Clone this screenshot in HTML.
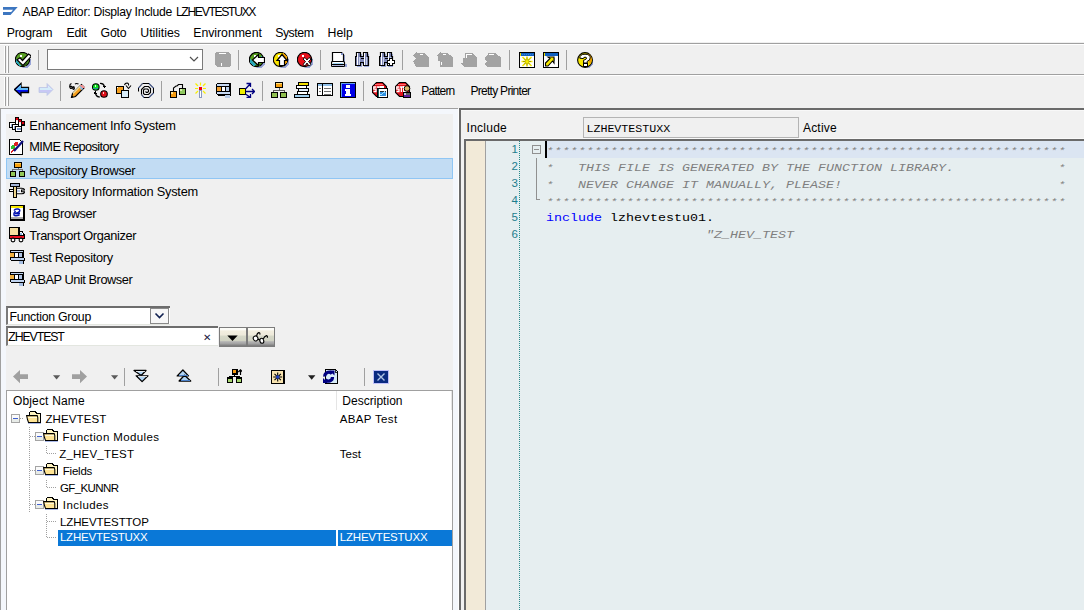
<!DOCTYPE html>
<html><head><meta charset="utf-8"><style>
html,body{margin:0;padding:0;width:1084px;height:610px;overflow:hidden;background:#fff;font-family:'Liberation Sans', sans-serif}
body>div{position:absolute}
.t{white-space:nowrap}
.c{color:#7f7f7f;font-style:italic}
.k{color:#0000ff}
.a{display:inline-block;transform:translateY(1px) scale(0.85)}
</style></head><body>
<div style="left:0px;top:0px;width:1084px;height:43px;background:#fff"></div>
<svg style="position:absolute;left:3px;top:6px" width="16" height="16" viewBox="0 0 16 16" shape-rendering="crispEdges"><path d="M0 1 H14.7 L7.5 9 H0 Z" fill="#3c76c0" shape-rendering="geometricPrecision"/><path d="M0 3.8 H10 L8.2 5.9 H0 Z" fill="#fff" shape-rendering="geometricPrecision"/></svg>
<div class="t" style="left:22.6px;top:4.66px;font-size:12.2px;line-height:normal;color:#000;letter-spacing:-0.267px;font-family:'Liberation Sans', sans-serif;">ABAP Editor: Display Include</div>
<div class="t" style="left:175.9px;top:4.66px;font-size:12.2px;line-height:normal;color:#000;letter-spacing:-1.353px;font-family:'Liberation Sans', sans-serif;">LZHEVTESTUXX</div>
<div class="t" style="left:6.7px;top:25.77px;font-size:12.3px;line-height:normal;color:#000;letter-spacing:-0.227px;font-family:'Liberation Sans', sans-serif;">Program</div>
<div class="t" style="left:66.5px;top:25.77px;font-size:12.3px;line-height:normal;color:#000;letter-spacing:-0.265px;font-family:'Liberation Sans', sans-serif;">Edit</div>
<div class="t" style="left:100.5px;top:25.77px;font-size:12.3px;line-height:normal;color:#000;letter-spacing:-0.155px;font-family:'Liberation Sans', sans-serif;">Goto</div>
<div class="t" style="left:140.29999999999998px;top:25.77px;font-size:12.3px;line-height:normal;color:#000;letter-spacing:-0.005px;font-family:'Liberation Sans', sans-serif;">Utilities</div>
<div class="t" style="left:193.29999999999998px;top:25.77px;font-size:12.3px;line-height:normal;color:#000;letter-spacing:-0.045px;font-family:'Liberation Sans', sans-serif;">Environment</div>
<div class="t" style="left:275.2px;top:25.77px;font-size:12.3px;line-height:normal;color:#000;letter-spacing:-0.462px;font-family:'Liberation Sans', sans-serif;">System</div>
<div class="t" style="left:327.5px;top:25.77px;font-size:12.3px;line-height:normal;color:#000;letter-spacing:0.034px;font-family:'Liberation Sans', sans-serif;">Help</div>
<div style="left:0px;top:42px;width:1084px;height:1px;background:#f0f0f0"></div>
<div style="left:0px;top:43px;width:1084px;height:1px;background:#a0a0a0"></div>
<div style="left:0px;top:44px;width:1084px;height:1px;background:#fff"></div>
<div style="left:0px;top:45px;width:1084px;height:29px;background:#f0f0f0"></div>
<div style="left:0px;top:74px;width:1084px;height:1px;background:#a0a0a0"></div>
<div style="left:0px;top:75px;width:1084px;height:1px;background:#fff"></div>
<div style="left:0px;top:76px;width:1084px;height:32px;background:#f0f0f0"></div>
<div style="left:0px;top:108px;width:1084px;height:1px;background:#a0a0a0"></div>
<div style="left:4px;top:46px;width:1px;height:27px;background:#fff"></div>
<div style="left:5px;top:46px;width:1px;height:27px;background:#a0a0a0"></div>
<div style="left:7px;top:46px;width:1px;height:27px;background:#fff"></div>
<div style="left:8px;top:46px;width:1px;height:27px;background:#a0a0a0"></div>
<div style="left:4px;top:77px;width:1px;height:29px;background:#fff"></div>
<div style="left:5px;top:77px;width:1px;height:29px;background:#a0a0a0"></div>
<div style="left:7px;top:77px;width:1px;height:29px;background:#fff"></div>
<div style="left:8px;top:77px;width:1px;height:29px;background:#a0a0a0"></div>
<svg style="position:absolute;left:15px;top:52px" width="16" height="16" viewBox="0 0 16 16" shape-rendering="crispEdges"><path d="M6 16 H12 L16 12 V6 L12 14 Z" fill="#9aa6d8"/><path d="M7.5 0.4 A7.1 7.1 0 1 1 7.49 0.4 Z" fill="#5aa024" stroke="#000" stroke-width="1.1" shape-rendering="geometricPrecision"/><path d="M1 6 L4 11 L6 13.5 L4.5 14 L1 10.5 Z" fill="#2aa8b8"/><path d="M5 14 H10 L13 11 L9 12 Z" fill="#2e6412"/><rect x="5" y="3" width="2" height="2" fill="#fff"/><path d="M2 7.8 L5 5.8 L7.5 8.5 L13.5 2 L16.5 4 L8 13.5 Z" fill="#fff" stroke="#000" stroke-width="1.2" shape-rendering="geometricPrecision"/></svg>
<div style="left:38px;top:50px;width:1px;height:20px;background:#a0a0a0"></div>
<div style="left:47px;top:49px;width:156px;height:21px;background:#fff;border:1px solid #7a7a7a;box-sizing:border-box"></div>
<svg style="position:absolute;left:189px;top:55px" width="10" height="8" viewBox="0 0 10 8"><path d="M1 2 L5 6 L9 2" fill="none" stroke="#505050" stroke-width="1.2"/></svg>
<svg style="position:absolute;left:215px;top:52px" width="16" height="16" viewBox="0 0 16 16" shape-rendering="crispEdges"><path d="M1 0.3 H14 L16 2.3 V14 L15 14.7 H2.5 L0 12.3 V1.3 Z" fill="#a3a3a3"/><rect x="4" y="1" width="7" height="1" fill="#fff"/><rect x="6" y="11" width="1" height="3" fill="#fff"/></svg>
<div style="left:238px;top:50px;width:1px;height:20px;background:#a0a0a0"></div>
<svg style="position:absolute;left:249px;top:52px" width="16" height="16" viewBox="0 0 16 16" shape-rendering="crispEdges"><path d="M6 16 H12 L16 12 V6 L12 14 Z" fill="#9aa6d8"/><path d="M7.5 0.4 A7.1 7.1 0 1 1 7.49 0.4 Z" fill="#58a020" stroke="#000" stroke-width="1.2" shape-rendering="geometricPrecision"/><path d="M1 6 L6 12 L8 14 L4.5 14 L1 10.5 Z" fill="#2aa8b8"/><path d="M11 4 L14 6 L12 3 Z" fill="#2aa8b8"/><path d="M5 14 H10 L12 12 L8 12 Z" fill="#2e6412"/><rect x="5" y="3" width="2" height="2" fill="#fff"/><path d="M3.5 8 L9.5 2.5 V5.5 H15.5 V10.5 H9.5 V13.5 Z" fill="#fff" stroke="#000" stroke-width="1.2" shape-rendering="geometricPrecision"/></svg>
<svg style="position:absolute;left:273px;top:52px" width="16" height="16" viewBox="0 0 16 16" shape-rendering="crispEdges"><path d="M6 16 H12 L16 12 V6 L12 14 Z" fill="#9aa6d8"/><path d="M7.5 0.4 A7.1 7.1 0 1 1 7.49 0.4 Z" fill="#f8e400" stroke="#000" stroke-width="1.2" shape-rendering="geometricPrecision"/><path d="M10 1 L14 5 V10 L12 12 L11 6 Z" fill="#f0a000"/><path d="M1 8 L3 12 L5 14 L2 11 Z" fill="#f09000"/><rect x="5" y="3" width="2" height="2" fill="#fff"/><path d="M9 2.5 L14 8.5 H11.5 V13.5 H6.5 V8.5 H4 Z" fill="#fff" stroke="#000" stroke-width="1.2" shape-rendering="geometricPrecision"/></svg>
<svg style="position:absolute;left:297px;top:52px" width="16" height="16" viewBox="0 0 16 16" shape-rendering="crispEdges"><path d="M6 16 H12 L16 12 V6 L12 14 Z" fill="#9aa6d8"/><path d="M7.5 0.4 A7.1 7.1 0 1 1 7.49 0.4 Z" fill="#e8101a" stroke="#000" stroke-width="1.2" shape-rendering="geometricPrecision"/><rect x="5" y="3" width="2" height="2" fill="#fff"/><path d="M6 7 L8 5.5 L10 8 L12 5.5 L14 7 L11.5 9.5 L14 12.5 L12 14 L10 11 L8 14 L6 12.5 L8.5 9.5 Z" fill="#fff" stroke="#000" stroke-width="0.9" shape-rendering="geometricPrecision"/></svg>
<div style="left:320px;top:50px;width:1px;height:20px;background:#a0a0a0"></div>
<svg style="position:absolute;left:331px;top:52px" width="16" height="16" viewBox="0 0 16 16" shape-rendering="crispEdges"><path d="M3 12 H16 V15 H3 Z M13 3 H14 V11 H13 Z" fill="#9aa6d8"/><path d="M1.5 0.5 H10.5 L12.5 2.5 V10.5 H1.5 Z" fill="#fff" stroke="#000" stroke-width="1.2" shape-rendering="geometricPrecision"/><rect x="10" y="1" width="2" height="2" fill="#8090c8"/><rect x="0.5" y="9.5" width="13" height="5" rx="1" fill="#fff" stroke="#000" stroke-width="1.2" shape-rendering="geometricPrecision"/><rect x="1" y="11.5" width="12" height="1" fill="#000"/><rect x="2" y="10.5" width="10" height="1" fill="#a0d8f8"/><rect x="2" y="13" width="10" height="1" fill="#a8b0d8"/></svg>
<svg style="position:absolute;left:355px;top:52px" width="16" height="16" viewBox="0 0 16 16" shape-rendering="crispEdges"><path d="M2 2 H7 V6 H9 V2 H14 V15 H9 V12 H7 V15 H2 Z" fill="#9aa6d8"/><path d="M1.5 0.5 H5.5 V4.5 H8.5 V0.5 H12.5 V4.5 H13.5 V13.5 H8.5 V10.5 H5.5 V13.5 H0.5 V4.5 H1.5 Z" fill="#8088b8" stroke="#000" stroke-width="1.2" shape-rendering="geometricPrecision"/><rect x="2" y="1" width="1.2" height="12" fill="#fff"/><rect x="9" y="1" width="1.2" height="12" fill="#fff"/><rect x="4" y="5" width="1" height="8" fill="#c8d0e8"/><rect x="11" y="5" width="1" height="8" fill="#c8d0e8"/><rect x="5.5" y="5.5" width="3" height="1" fill="#000"/></svg>
<svg style="position:absolute;left:379px;top:52px" width="16" height="16" viewBox="0 0 16 16" shape-rendering="crispEdges"><path d="M2 2 H7 V6 H9 V2 H14 V15 H9 V12 H7 V15 H2 Z" fill="#9aa6d8"/><path d="M1.5 0.5 H5.5 V4.5 H8.5 V0.5 H12.5 V4.5 H13.5 V13.5 H8.5 V10.5 H5.5 V13.5 H0.5 V4.5 H1.5 Z" fill="#8088b8" stroke="#000" stroke-width="1.2" shape-rendering="geometricPrecision"/><rect x="2" y="1" width="1.2" height="12" fill="#fff"/><rect x="9" y="1" width="1.2" height="12" fill="#fff"/><rect x="4" y="5" width="1" height="8" fill="#c8d0e8"/><rect x="11" y="5" width="1" height="8" fill="#c8d0e8"/><rect x="5.5" y="5.5" width="3" height="1" fill="#000"/><path d="M10.5 6.5 H13.5 V8.5 H15.5 V11.5 H13.5 V13.5 H10.5 V11.5 H8.5 V8.5 H10.5 Z" fill="#fff" stroke="#000" stroke-width="1"/></svg>
<div style="left:402px;top:50px;width:1px;height:20px;background:#a0a0a0"></div>
<svg style="position:absolute;left:413px;top:52px" width="16" height="16" viewBox="0 0 16 16" shape-rendering="crispEdges"><path d="M0 3.5 L3.5 0 L4.5 1 H11.5 L16 5.5 V15 H3.5 L1.8 13 L0 9.5 L3 7 Z" fill="#a3a3a3"/><rect x="7" y="2" width="3" height="1" fill="#fff"/></svg>
<svg style="position:absolute;left:437px;top:52px" width="16" height="16" viewBox="0 0 16 16" shape-rendering="crispEdges"><path d="M0 3.3 L3.6 0 L5 1 H10.6 L16 5.3 V14.6 H3 V9.3 H1 V4.3 Z" fill="#a3a3a3"/><rect x="5.5" y="2" width="3" height="1" fill="#fff"/><rect x="4" y="10" width="1" height="3" fill="#fff"/></svg>
<svg style="position:absolute;left:461px;top:52px" width="16" height="16" viewBox="0 0 16 16" shape-rendering="crispEdges"><path d="M4 1 H11.5 L16 5.3 V14.6 H3.2 L0 11.6 L2.2 10 V6 H4 Z" fill="#a3a3a3"/><path d="M5.5 6 V2.5 H10.5" fill="none" stroke="#fff"/></svg>
<svg style="position:absolute;left:485px;top:52px" width="16" height="16" viewBox="0 0 16 16" shape-rendering="crispEdges"><path d="M3 1 H10.4 L15.7 5.3 V14.6 H2.3 L0 12 L2.3 9.5 L0 7 L0 5.3 L3 3 Z" fill="#a3a3a3"/><rect x="4" y="2" width="5" height="1" fill="#fff"/></svg>
<div style="left:509px;top:50px;width:1px;height:20px;background:#a0a0a0"></div>
<svg style="position:absolute;left:519px;top:52px" width="16" height="16" viewBox="0 0 16 16" shape-rendering="crispEdges"><rect x="0.5" y="0.5" width="15" height="15" fill="#fff" stroke="#000" stroke-width="1.2"/><rect x="1" y="1" width="14" height="3" fill="#1060c0"/><rect x="1" y="1" width="1" height="3" fill="#f0e000"/><path d="M3 2.5 H14" stroke="#5090e0" stroke-width="0.7" stroke-dasharray="1 1"/><path d="M8 4.5 V14.5 M2.5 9.5 H13.5 M3.5 5 L12.5 14 M12.5 5 L3.5 14" stroke="#f2e600" stroke-width="1.6" shape-rendering="geometricPrecision"/><path d="M8 5.5 V13.5 M4 9.5 H12 M5.2 6.7 L10.8 12.3 M10.8 6.7 L5.2 12.3" stroke="#202000" stroke-width="0.7" opacity="0.55" shape-rendering="geometricPrecision"/><circle cx="8" cy="9.5" r="1.6" fill="#f8f000" shape-rendering="geometricPrecision"/></svg>
<svg style="position:absolute;left:543px;top:52px" width="16" height="16" viewBox="0 0 16 16" shape-rendering="crispEdges"><rect x="0.5" y="0.5" width="15" height="15" fill="#fff" stroke="#000" stroke-width="1.2"/><rect x="1" y="1" width="14" height="3" fill="#1060c0"/><rect x="1" y="1" width="1" height="3" fill="#f0e000"/><path d="M11 12 L12 6 L6 6" fill="#9aa6d8"/><path d="M2.5 14 L2.5 11 L7 6.5 L5 5 H11 V11 L9.5 9 L5 14 Z" fill="#f2e600" stroke="#000" stroke-width="1.1" shape-rendering="geometricPrecision"/></svg>
<div style="left:566px;top:50px;width:1px;height:20px;background:#a0a0a0"></div>
<svg style="position:absolute;left:577px;top:52px" width="16" height="16" viewBox="0 0 16 16" shape-rendering="crispEdges"><path d="M8 16 H13 L16 12 V7 Z" fill="#9aa6d8"/><circle cx="8" cy="8" r="7.4" fill="#f8e800" stroke="#000" stroke-width="1.1" shape-rendering="geometricPrecision"/><path d="M11 1.8 A6.6 6.6 0 0 1 14.6 9 L13 12.5 L11.5 9 Z" fill="#f0a000" shape-rendering="geometricPrecision"/><path d="M2.8 6.2 Q2.8 2.2 8 2.2 Q13.2 2.2 13.2 5.8 Q13.2 8.6 10.2 9.3 V11 H6.6 V8.2 Q9.6 7.6 9.6 6 Q9.6 5.2 8 5.2 Q6.4 5.2 6.4 6.6 Z" fill="#fff" stroke="#000" stroke-width="1" shape-rendering="geometricPrecision"/><rect x="6.5" y="11.5" width="4" height="3" fill="#fff" stroke="#000" stroke-width="1"/></svg>
<svg style="position:absolute;left:14px;top:82px" width="16" height="16" viewBox="0 0 16 16" shape-rendering="crispEdges"><path d="M0.5 7.5 L7 1.5 V5.5 H14.5 V10.5 H7 V13.5 Z" fill="#0010f0" stroke="#000" stroke-width="1.3" shape-rendering="geometricPrecision"/><path d="M2 7 L6.5 3 V6.3 H14 V7.8 H2 Z" fill="#60b8f8"/></svg>
<svg style="position:absolute;left:38px;top:82px" width="16" height="16" viewBox="0 0 16 16" shape-rendering="crispEdges"><path d="M15 7.5 L9 1.5 V5.5 H1 V10.5 H9 V13.5 Z" fill="#c8c8f4" stroke="#bcc8e4" stroke-width="0.8" shape-rendering="geometricPrecision"/><path d="M1.5 6 H9.5 V3 L14 7.5 H1.5 Z" fill="#d4ecfa"/></svg>
<div style="left:60px;top:81px;width:1px;height:20px;background:#a0a0a0"></div>
<svg style="position:absolute;left:69px;top:82px" width="16" height="16" viewBox="0 0 16 16" shape-rendering="crispEdges"><path d="M2.5 15.5 L3.5 11.5 L12.5 2.5 L15.5 5.5 L6.5 14.5 Z" fill="#f5a020" stroke="#000" stroke-width="1.2" shape-rendering="geometricPrecision"/><path d="M12.5 2.5 L15.5 5.5 L14.2 6.8 L11.2 3.8 Z" fill="#f09090"/><path d="M10.5 4.5 L13.5 7.5" stroke="#90b8e8" stroke-width="1.8" shape-rendering="geometricPrecision"/><path d="M2.5 15.5 L3 13.5 L4.5 15 Z" fill="#000"/><path d="M4 11.5 L11 4.5" stroke="#ffe8a0" stroke-width="1.2" shape-rendering="geometricPrecision"/><path d="M2.5 1.5 Q0.5 2 0.8 5 Q1.2 7 2.6 6.2 Q3.5 5.5 2.8 4.5 Q2 4 1 4.8 M4.6 4.5 Q3.6 5 4 7 Q4.5 8 5.2 7 Q5.6 5.5 4.6 4.5 M6 2 Q7.5 1 9.5 2" fill="none" stroke="#000" stroke-width="1.2" shape-rendering="geometricPrecision"/></svg>
<svg style="position:absolute;left:92px;top:82px" width="16" height="16" viewBox="0 0 16 16" shape-rendering="crispEdges"><circle cx="3.8" cy="5" r="3.3" fill="#10e020" stroke="#000" stroke-width="1.1" shape-rendering="geometricPrecision"/><path d="M1 6 Q3 9 6.8 6" fill="#2890a0"/><circle cx="3.3" cy="4" r="0.9" fill="#d0ffd0"/><circle cx="12" cy="12" r="3.3" fill="#e0101a" stroke="#000" stroke-width="1.1" shape-rendering="geometricPrecision"/><circle cx="11.3" cy="11" r="0.9" fill="#ffd0d0"/><path d="M8 1.5 Q11.5 1.2 12.5 4.5" fill="none" stroke="#000" stroke-width="1.2" shape-rendering="geometricPrecision"/><path d="M10.5 3.5 H14.5 L12.5 6.5 Z" fill="#000"/><path d="M8 15 Q4.5 15.2 3.5 11.5" fill="none" stroke="#000" stroke-width="1.2" shape-rendering="geometricPrecision"/><path d="M1.5 12 L3.5 9 L5.5 12 Z" fill="#000"/></svg>
<svg style="position:absolute;left:116px;top:82px" width="16" height="16" viewBox="0 0 16 16" shape-rendering="crispEdges"><rect x="0.5" y="4.5" width="7" height="7" fill="#f5a020" stroke="#000" stroke-width="1.2"/><rect x="1" y="5" width="1" height="1" fill="#fff"/><rect x="5.5" y="8.5" width="7" height="7" fill="#c8e0f0" stroke="#000" stroke-width="1.2"/><rect x="6.2" y="9.2" width="5.6" height="5.6" fill="#d8ecf8"/><path d="M8.5 3 Q9 1 11 1 Q13 1.2 12.5 3.5" fill="none" stroke="#000" stroke-width="1.1" shape-rendering="geometricPrecision"/><path d="M10 3.5 L12.5 6.5 L15 3.5" fill="none" stroke="#000" stroke-width="1.1" shape-rendering="geometricPrecision"/></svg>
<svg style="position:absolute;left:138px;top:82px" width="16" height="16" viewBox="0 0 16 16" shape-rendering="crispEdges"><g fill="none" stroke="#000" stroke-width="1.1" shape-rendering="geometricPrecision"><path d="M0.5 9.5 V6 L4.5 1.5 H11 L15.5 6 V11 L11 15.5 H6 L3.5 12.5 V7.5 L6.5 4.5 H10.5 L12.5 6.5 V10.5 L10.5 12.5 H6.5 L5.5 11.5 V8 L6.5 7 H9.5 L10.5 8 V9.5 L9.5 10.5 H8.5 L7.5 9.5"/></g><path d="M0.5 6 L4.5 1.5 M11 1.5 L15.5 6 M15.5 11 L11 15.5 M6 15.5 L3.5 12.5" stroke="#7890d0" stroke-width="1.1" opacity="0.6" fill="none"/></svg>
<div style="left:161px;top:81px;width:1px;height:20px;background:#a0a0a0"></div>
<svg style="position:absolute;left:170px;top:82px" width="16" height="16" viewBox="0 0 16 16" shape-rendering="crispEdges"><rect x="0.5" y="9.5" width="6" height="6" fill="#f59a10" stroke="#000" stroke-width="1.2"/><rect x="1.2" y="10.2" width="2" height="2" fill="#ffe090"/><rect x="9.5" y="6.5" width="6" height="6" fill="#90c860" stroke="#000" stroke-width="1.2"/><rect x="10.2" y="7.2" width="2" height="2" fill="#d8f0b0"/><path d="M3.5 9 V6 L6 4 H7 L8.5 2.5 H12.5 V6" fill="none" stroke="#000" stroke-width="1.1" shape-rendering="geometricPrecision"/></svg>
<svg style="position:absolute;left:195px;top:82px" width="16" height="16" viewBox="0 0 16 16" shape-rendering="crispEdges"><rect x="4.5" y="8.5" width="2" height="7" fill="#fff" stroke="#8898c0"/><rect x="4" y="5" width="3" height="3" fill="#f00010"/><path d="M5.5 0.5 V3.5 M0 6.5 H3 M8 6.5 H11 M0.5 1.5 L3 4 M10.5 1.5 L8 4 M0.5 11.5 L3 9 M10.5 11.5 L8 9" stroke="#f8f000" stroke-width="1.2" shape-rendering="geometricPrecision"/></svg>
<svg style="position:absolute;left:215px;top:82px" width="16" height="16" viewBox="0 0 16 16" shape-rendering="crispEdges"><path d="M2.5 0.5 H15.5 V11.5 H16.5 V13.5 H2.5 L0.5 11.5 V2.5 Z" fill="#000"/><rect x="2" y="2" width="12" height="2" fill="#c8daf4"/><rect x="2" y="5" width="4" height="4" fill="#f0a030"/><rect x="7" y="5" width="3" height="4" fill="#fff"/><rect x="11" y="5" width="3" height="4" fill="#b8cce8"/><rect x="2" y="10" width="13" height="2" fill="#c8daf4"/><rect x="10" y="13" width="5" height="3" fill="#b8cce8"/></svg>
<svg style="position:absolute;left:239px;top:82px" width="16" height="16" viewBox="0 0 16 16" shape-rendering="crispEdges"><rect x="0.5" y="6.5" width="6" height="6" fill="#f0f000" stroke="#000" stroke-width="1.3"/><path d="M6.5 9.5 H15.5 M13 7 L15.5 9.5 L13 12 M6.5 7 L11.5 1.5 M7.5 1.5 H11.5 V5 M6.5 12 L11.5 15.5 M7.5 15.5 H11.5 V12" fill="none" stroke="#000080" stroke-width="1.3" shape-rendering="geometricPrecision"/></svg>
<div style="left:262px;top:81px;width:1px;height:20px;background:#a0a0a0"></div>
<svg style="position:absolute;left:271px;top:82px" width="16" height="16" viewBox="0 0 16 16" shape-rendering="crispEdges"><rect x="4.5" y="0.5" width="7" height="5" fill="#f5a010" stroke="#000"/><rect x="5" y="1" width="6" height="1" fill="#ffe080"/><path d="M8 6 V8 M2.5 11 V8.5 H13.5 V11" fill="none" stroke="#606060" stroke-width="1"/><rect x="0.5" y="10.5" width="6" height="5" fill="#90c050" stroke="#000"/><rect x="9.5" y="10.5" width="6" height="5" fill="#90c050" stroke="#000"/></svg>
<svg style="position:absolute;left:294px;top:82px" width="16" height="16" viewBox="0 0 16 16" shape-rendering="crispEdges"><rect x="4.5" y="0.5" width="10" height="3" fill="#f5e000" stroke="#000"/><rect x="2.5" y="3.5" width="10" height="3" fill="#fff" stroke="#000"/><rect x="4.5" y="6.5" width="10" height="3" fill="#e0f0ff" stroke="#000"/><rect x="3.5" y="9.5" width="10" height="3" fill="#fff" stroke="#000"/><rect x="0.5" y="12.5" width="15" height="3" fill="#a0d0f0" stroke="#000"/></svg>
<svg style="position:absolute;left:317px;top:82px" width="16" height="16" viewBox="0 0 16 16" shape-rendering="crispEdges"><rect x="0.5" y="1.5" width="15" height="12" fill="#fff" stroke="#000" stroke-width="1.2"/><rect x="1" y="2" width="14" height="2" fill="#90c0e8"/><rect x="5" y="2" width="1" height="11" fill="#000"/><path d="M2 6.5 H4 M2 9.5 H4 M7 6.5 H14 M7 9.5 H14 M7 12 H14" stroke="#707070"/></svg>
<svg style="position:absolute;left:340px;top:82px" width="16" height="16" viewBox="0 0 16 16" shape-rendering="crispEdges"><rect x="0.5" y="0.5" width="15" height="15" fill="#0000e8" stroke="#000" stroke-width="1.2"/><rect x="1" y="1" width="14" height="1" fill="#60a0f0"/><rect x="1" y="1" width="1" height="14" fill="#60a0f0"/><rect x="6" y="3" width="4" height="3" fill="#fff"/><path d="M5 7 H10 V12 H11 V14 H5 V12 H6 V9 H5 Z" fill="#fff"/></svg>
<div style="left:363px;top:81px;width:1px;height:20px;background:#a0a0a0"></div>
<svg style="position:absolute;left:372px;top:82px" width="16" height="16" viewBox="0 0 16 16" shape-rendering="crispEdges"><path d="M4.5 0.5 H10.5 L14.5 4.5 V10.5 L10.5 14.5 H4.5 L0.5 10.5 V4.5 Z" fill="#e0101a" stroke="#000" stroke-width="1.1" shape-rendering="geometricPrecision"/><rect x="3" y="2" width="8" height="1.2" fill="#ff7070"/><path d="M4.2 5 H1.8 V7.2 H4 V9.5 H1.5 M4.8 5 H8 M6.4 5 V10" fill="none" stroke="#fff" stroke-width="1.3" shape-rendering="geometricPrecision"/><rect x="8.6" y="5" width="3" height="4.5" fill="none" stroke="#fff" stroke-width="1.3"/><rect x="5.5" y="6.5" width="10" height="9" fill="#fff" stroke="#000" stroke-width="1.1"/><rect x="6" y="7" width="1" height="8" fill="#206060"/><rect x="7.5" y="8.5" width="6.5" height="5.5" fill="#3090e0"/><rect x="7.5" y="8.5" width="6.5" height="1" fill="#303030"/><path d="M8.5 13 L13 9.5" stroke="#a0e0ff"/></svg>
<svg style="position:absolute;left:395px;top:82px" width="16" height="16" viewBox="0 0 16 16" shape-rendering="crispEdges"><path d="M4.5 0.5 H10.5 L14.5 4.5 V10.5 L10.5 14.5 H4.5 L0.5 10.5 V4.5 Z" fill="#e0101a" stroke="#000" stroke-width="1.1" shape-rendering="geometricPrecision"/><rect x="3" y="2" width="8" height="1.2" fill="#ff7070"/><path d="M4.2 5 H1.8 V7.2 H4 V9.5 H1.5 M4.8 5 H8 M6.4 5 V10" fill="none" stroke="#fff" stroke-width="1.3" shape-rendering="geometricPrecision"/><rect x="8.6" y="5" width="3" height="4.5" fill="none" stroke="#fff" stroke-width="1.3"/><circle cx="12" cy="6.5" r="2.8" fill="#d8b868" stroke="#000" shape-rendering="geometricPrecision"/><rect x="8.5" y="10.5" width="7" height="5" fill="#606060" stroke="#000"/><rect x="9" y="13" width="6" height="2" fill="#6020a0"/><rect x="9" y="11" width="2" height="2" fill="#d0c0f0"/></svg>
<div class="t" style="left:421.3px;top:84.34px;font-size:12px;line-height:normal;color:#000;letter-spacing:-0.782px;font-family:'Liberation Sans', sans-serif;">Pattern</div>
<div class="t" style="left:470.5px;top:84.34px;font-size:12px;line-height:normal;color:#000;letter-spacing:-0.725px;font-family:'Liberation Sans', sans-serif;">Pretty Printer</div>
<div style="left:0px;top:109px;width:1px;height:501px;background:#a0a0a0"></div>
<div style="left:1px;top:109px;width:457px;height:501px;background:#f4f7fc"></div>
<div style="left:6px;top:114px;width:447px;height:496px;background:#f0f0f0"></div>
<div style="left:6px;top:158px;width:447px;height:21px;background:#c2dcf3;border:1px solid #90c6f4;box-sizing:border-box"></div>
<svg style="position:absolute;left:9px;top:117px" width="16" height="16" viewBox="0 0 16 16" shape-rendering="crispEdges"><rect x="6.5" y="0.6" width="3" height="7" fill="#fff" stroke="#000" stroke-width="1.2"/><rect x="9.5" y="2.6" width="3" height="7" fill="#fff" stroke="#000" stroke-width="1.2"/><rect x="12.5" y="4.6" width="3" height="3.4" fill="#fff" stroke="#000" stroke-width="1.2"/><circle cx="8" cy="2.1" r="1.25" fill="#e00010" shape-rendering="geometricPrecision"/><circle cx="11" cy="4.1" r="1.25" fill="#e00010" shape-rendering="geometricPrecision"/><circle cx="14" cy="6.1" r="1.25" fill="#e00010" shape-rendering="geometricPrecision"/><rect x="0.6" y="5.6" width="6" height="5" fill="#fff" stroke="#000" stroke-width="1.2"/><rect x="3.6" y="7.6" width="6" height="5" fill="#fff" stroke="#000" stroke-width="1.2"/><rect x="6.6" y="9.8" width="6" height="5" fill="#fff" stroke="#000" stroke-width="1.2"/><rect x="8" y="11.3" width="4" height="2" fill="#8098c8"/><rect x="1.5" y="7" width="1" height="3" fill="#90a8d8"/><rect x="4.5" y="9" width="1" height="3" fill="#90a8d8"/></svg>
<div class="t" style="left:29.3px;top:117.82px;font-size:12.8px;line-height:normal;color:#000;letter-spacing:-0.156px;font-family:'Liberation Sans', sans-serif;">Enhancement Info System</div>
<svg style="position:absolute;left:9px;top:139px" width="16" height="16" viewBox="0 0 16 16" shape-rendering="crispEdges"><path d="M0.5 0.5 H10.5 L13.5 3.5 V15.5 H0.5 Z" fill="#fff" stroke="#000" stroke-width="1.2"/><circle cx="4" cy="8" r="2" fill="#30c030"/><circle cx="7" cy="5" r="2" fill="#e02020"/><path d="M2 13 L6 10" stroke="#e02020" stroke-width="1.5"/><path d="M5 12 L14 2" stroke="#101080" stroke-width="2.2" shape-rendering="geometricPrecision"/></svg>
<div class="t" style="left:29.3px;top:139.42px;font-size:12.8px;line-height:normal;color:#000;letter-spacing:-0.597px;font-family:'Liberation Sans', sans-serif;">MIME Repository</div>
<svg style="position:absolute;left:9px;top:162px" width="16" height="16" viewBox="0 0 16 16" shape-rendering="crispEdges"><rect x="5.6" y="0.6" width="6.8" height="4.6" fill="#f5a010" stroke="#000" stroke-width="1.2"/><rect x="6.2" y="1.2" width="5.6" height="1.2" fill="#ffd060"/><path d="M9 5.5 V7.5 M3.8 9.5 V7.5 H13.2 V9.5" fill="none" stroke="#707070" stroke-width="1"/><rect x="1.1" y="9.6" width="5.4" height="4.6" fill="#90c858" stroke="#000" stroke-width="1.2"/><rect x="10.4" y="9.6" width="5.4" height="4.6" fill="#90c858" stroke="#000" stroke-width="1.2"/></svg>
<div class="t" style="left:29.3px;top:162.82px;font-size:12.8px;line-height:normal;color:#000;letter-spacing:-0.317px;font-family:'Liberation Sans', sans-serif;">Repository Browser</div>
<svg style="position:absolute;left:9px;top:183px" width="16" height="16" viewBox="0 0 16 16" shape-rendering="crispEdges"><rect x="1.6" y="0.6" width="9" height="2.8" fill="#a8b8d8" stroke="#000" stroke-width="1.2"/><rect x="4.6" y="3.4" width="2.8" height="11" fill="#f0d890" stroke="#000" stroke-width="1.2"/><rect x="0.6" y="6.6" width="4" height="2.2" fill="#fff" stroke="#000" stroke-width="1.1"/><path d="M7.5 5.2 H12.8 Q15.5 5.2 15.5 7 H12.5 V8.8 H15.5 Q15.5 10.8 12.8 10.8 H7.5 Z" fill="#fff" stroke="#000" stroke-width="1.1" shape-rendering="geometricPrecision"/><rect x="8" y="7" width="3" height="2" fill="#b8c8e8"/></svg>
<div class="t" style="left:29.3px;top:184.12px;font-size:12.8px;line-height:normal;color:#000;letter-spacing:-0.214px;font-family:'Liberation Sans', sans-serif;">Repository Information System</div>
<svg style="position:absolute;left:9px;top:205px" width="16" height="16" viewBox="0 0 16 16" shape-rendering="crispEdges"><rect x="1.2" y="0.2" width="13.6" height="14.6" fill="#fff" stroke="#000" stroke-width="1.4"/><rect x="2" y="1" width="12" height="2" fill="#f8e800"/><rect x="2" y="11.5" width="12" height="2.6" fill="#a8a8a8"/><path d="M0.5 13.5 L2 11.5" stroke="#000" stroke-width="1"/><path d="M5 5.5 Q6 3.5 9 4 Q11.5 4.5 10.5 6.5 Q9.5 8 6 8.5 H11 M6.5 6 Q4.5 8 5 10 Q6 11.5 10.5 10" fill="none" stroke="#0010b0" stroke-width="1.5" shape-rendering="geometricPrecision"/></svg>
<div class="t" style="left:29.3px;top:205.82px;font-size:12.8px;line-height:normal;color:#000;letter-spacing:-0.386px;font-family:'Liberation Sans', sans-serif;">Tag Browser</div>
<svg style="position:absolute;left:9px;top:227px" width="16" height="16" viewBox="0 0 16 16" shape-rendering="crispEdges"><rect x="0.6" y="0.6" width="9.4" height="8" fill="#f8e0a0" stroke="#000" stroke-width="1.2"/><path d="M10 4.6 H13 L15.4 8 V11 H10 Z" fill="#fff" stroke="#000" stroke-width="1.2"/><rect x="11" y="5.5" width="2" height="2" fill="#90b8e0"/><rect x="0.6" y="8.6" width="14.8" height="3" fill="#f01020" stroke="#000" stroke-width="1.1"/><circle cx="4" cy="13" r="1.9" fill="#fff" stroke="#000" stroke-width="1.1" shape-rendering="geometricPrecision"/><circle cx="12" cy="13" r="1.9" fill="#fff" stroke="#000" stroke-width="1.1" shape-rendering="geometricPrecision"/></svg>
<div class="t" style="left:29.3px;top:227.82px;font-size:12.8px;line-height:normal;color:#000;letter-spacing:-0.385px;font-family:'Liberation Sans', sans-serif;">Transport Organizer</div>
<svg style="position:absolute;left:9px;top:249px" width="16" height="16" viewBox="0 0 16 16" shape-rendering="crispEdges"><path d="M1.5 0.5 H14.5 V8.5 H15.5 V11.5 H14.5 V14.5 H9.5 V11.5 H1.5 L0.5 10.5 V1.5 Z" fill="#000"/><rect x="2" y="1.5" width="12" height="1.6" fill="#c0d4f0"/><rect x="1" y="4" width="4" height="4" fill="#f0b040"/><rect x="6" y="4" width="3" height="4" fill="#fff"/><rect x="10" y="4" width="3" height="4" fill="#b0c4e4"/><rect x="2" y="9" width="13" height="1.8" fill="#c0d4f0"/><rect x="10" y="12" width="4" height="2.5" fill="#a8c0e4"/></svg>
<div class="t" style="left:29.3px;top:249.82px;font-size:12.8px;line-height:normal;color:#000;letter-spacing:-0.317px;font-family:'Liberation Sans', sans-serif;">Test Repository</div>
<svg style="position:absolute;left:9px;top:271px" width="16" height="16" viewBox="0 0 16 16" shape-rendering="crispEdges"><path d="M1.5 0.5 H14.5 V8.5 H15.5 V11.5 H14.5 V14.5 H9.5 V11.5 H1.5 L0.5 10.5 V1.5 Z" fill="#000"/><rect x="2" y="1.5" width="12" height="1.6" fill="#c0d4f0"/><rect x="1" y="4" width="4" height="4" fill="#f0b040"/><rect x="6" y="4" width="3" height="4" fill="#fff"/><rect x="10" y="4" width="3" height="4" fill="#b0c4e4"/><rect x="2" y="9" width="13" height="1.8" fill="#c0d4f0"/><rect x="10" y="12" width="4" height="2.5" fill="#a8c0e4"/></svg>
<div class="t" style="left:29.3px;top:272.12px;font-size:12.8px;line-height:normal;color:#000;letter-spacing:-0.454px;font-family:'Liberation Sans', sans-serif;">ABAP Unit Browser</div>
<div style="left:6px;top:306px;width:164px;height:19px;background:#fff;border-top:2px solid #6d6d6d;border-left:2px solid #7a7a7a;border-bottom:1px solid #e3e6e0;box-sizing:border-box"></div>
<div class="t" style="left:9.6px;top:309.57px;font-size:12.3px;line-height:normal;color:#000;letter-spacing:-0.237px;font-family:'Liberation Sans', sans-serif;">Function Group</div>
<div style="left:150px;top:308px;width:19px;height:16px;background:#f7f7f7;border:1px solid #8a8a8a;box-sizing:border-box"></div>
<svg style="position:absolute;left:154px;top:312px" width="11" height="8" viewBox="0 0 11 8"><path d="M1.5 1.5 L5.5 5.5 L9.5 1.5" fill="none" stroke="#102050" stroke-width="1.6"/></svg>
<div style="left:6px;top:326px;width:212px;height:20px;background:#fff;border-top:2px solid #6d6d6d;border-left:2px solid #7a7a7a;border-bottom:1px solid #e3e6e0;box-sizing:border-box"></div>
<div class="t" style="left:8.3px;top:329.57px;font-size:12.3px;line-height:normal;color:#000;letter-spacing:-1.091px;font-family:'Liberation Sans', sans-serif;">ZHEVTEST</div>
<div class="t" style="left:203px;top:331.95px;font-size:10px;line-height:normal;color:#202040;letter-spacing:0px;font-family:'Liberation Sans', sans-serif;">&#x2715;</div>
<div style="left:219px;top:327px;width:28px;height:20px;background:linear-gradient(#fcfcf8 0%,#fcfcf8 10%,#f2eedf 16%,#eeeadb 38%,#d6d8c8 46%,#d0d2c2 70%,#b4b4b4 76%,#a4a4a4 86%,#787878 100%);border:1px solid #7c7c7c;box-sizing:border-box"></div>
<div style="left:247px;top:327px;width:28px;height:20px;background:linear-gradient(#fcfcf8 0%,#fcfcf8 10%,#f2eedf 16%,#eeeadb 38%,#d6d8c8 46%,#d0d2c2 70%,#b4b4b4 76%,#a4a4a4 86%,#787878 100%);border:1px solid #7c7c7c;box-sizing:border-box"></div>
<svg style="position:absolute;left:227px;top:335px" width="12" height="7" viewBox="0 0 12 7"><path d="M0.3 0.4 H10.7 L5.5 5.9 Z" fill="#000"/></svg>
<svg style="position:absolute;left:252px;top:329px" width="16" height="16" viewBox="0 0 16 16" shape-rendering="crispEdges"><g fill="#fff" stroke="#000" stroke-width="1.1" shape-rendering="geometricPrecision"><ellipse cx="3.6" cy="9.4" rx="2.3" ry="2.5" transform="rotate(-25 3.6 9.4)"/><ellipse cx="9.8" cy="11.8" rx="1.9" ry="2.5" transform="rotate(-20 9.8 11.8)"/></g><path d="M5.8 10.4 Q6.8 10.2 7.9 11 M4.6 7.2 Q5 4 6.8 3.6 Q8.2 3.6 7.8 5.6 M11.2 10 Q12.5 7 14.5 6.6 Q16 7 15.2 8.8" fill="none" stroke="#000" stroke-width="1.1" shape-rendering="geometricPrecision"/></svg>
<svg style="position:absolute;left:13px;top:369px" width="16" height="16" viewBox="0 0 16 16" shape-rendering="crispEdges"><path d="M0 7.5 L7 1 V5.2 H15 V10 H7 V14.3 Z" fill="#a0a0a0" shape-rendering="geometricPrecision"/></svg>
<svg style="position:absolute;left:53px;top:374.5px" width="8" height="5" viewBox="0 0 8 5"><path d="M0 0.2 H7.2 L3.6 4.5 Z" fill="#5a5a5a"/></svg>
<svg style="position:absolute;left:72px;top:369px" width="16" height="16" viewBox="0 0 16 16" shape-rendering="crispEdges"><path d="M15 7.5 L8 1 V5.2 H0 V10 H8 V14.3 Z" fill="#a0a0a0" shape-rendering="geometricPrecision"/></svg>
<svg style="position:absolute;left:111px;top:374.5px" width="8" height="5" viewBox="0 0 8 5"><path d="M0 0.2 H7.2 L3.6 4.5 Z" fill="#5a5a5a"/></svg>
<div style="left:124px;top:368px;width:1px;height:18px;background:#a0a0a0"></div>
<svg style="position:absolute;left:133px;top:369px" width="16" height="16" viewBox="0 0 16 16" shape-rendering="crispEdges"><path d="M1 1.5 H13 L8.2 6.5 Z" fill="#b0d4f4" stroke="#000" stroke-width="1.3" stroke-linejoin="round" shape-rendering="geometricPrecision"/><path d="M3.2 6.8 H15 L9.1 12.6 Z" fill="#b0d4f4" stroke="#000" stroke-width="1.3" stroke-linejoin="round" shape-rendering="geometricPrecision"/><path d="M2.5 2.3 H12" stroke="#fff" stroke-width="0.8"/><path d="M4.7 7.6 H14" stroke="#fff" stroke-width="0.8"/></svg>
<svg style="position:absolute;left:176px;top:369px" width="16" height="16" viewBox="0 0 16 16" shape-rendering="crispEdges"><path d="M6.9 1 L12.5 6.9 H1.2 Z" fill="#b0d4f4" stroke="#000" stroke-width="1.3" stroke-linejoin="round" shape-rendering="geometricPrecision"/><path d="M8.5 6.3 L14.7 12 H3.1 Z" fill="#b0d4f4" stroke="#000" stroke-width="1.3" stroke-linejoin="round" shape-rendering="geometricPrecision"/><path d="M2.5 6 H11.5 M4.5 11.2 H13.5" stroke="#4a80c8" stroke-width="1"/></svg>
<div style="left:218px;top:368px;width:1px;height:18px;background:#a0a0a0"></div>
<svg style="position:absolute;left:226px;top:368px" width="16" height="16" viewBox="0 0 16 16" shape-rendering="crispEdges"><rect x="6.5" y="1.5" width="4.5" height="4.5" fill="#f59a10" stroke="#000" stroke-width="1.2"/><path d="M8.7 6 V8.7 M3.8 10 V8.7 H13 V10" fill="none" stroke="#000" stroke-width="1.1"/><rect x="1.5" y="10" width="5" height="4.5" fill="#a8d870" stroke="#000" stroke-width="1.2"/><rect x="10.5" y="10" width="5" height="4.5" fill="#a8d870" stroke="#000" stroke-width="1.2"/><path d="M14.5 7 V1.8 M12.3 4 L14.5 1.8 L16.7 4" fill="none" stroke="#000" stroke-width="1.2" shape-rendering="geometricPrecision"/></svg>
<svg style="position:absolute;left:270px;top:369px" width="16" height="16" viewBox="0 0 16 16" shape-rendering="crispEdges"><rect x="1.5" y="1.5" width="12.5" height="13" fill="#f8e4b0" stroke="#000" stroke-width="1.6"/><path d="M7.7 3.5 V12.5 M3.2 8 H12.2 M4.5 4.8 L10.9 11.2 M10.9 4.8 L4.5 11.2" stroke="#000" stroke-width="1.1" shape-rendering="geometricPrecision"/><circle cx="7.7" cy="8" r="1.8" fill="#2040c0" shape-rendering="geometricPrecision"/></svg>
<svg style="position:absolute;left:308px;top:374.5px" width="8" height="5" viewBox="0 0 8 5"><path d="M0 0.2 H7.4 L3.7 4.7 Z" fill="#202020"/></svg>
<svg style="position:absolute;left:322px;top:368px" width="16" height="16" viewBox="0 0 16 16" shape-rendering="crispEdges"><path d="M3.5 1.5 H13.5 L15.5 3.5 V15.5 H3.5 Z" fill="#d8ecf8" stroke="#000" stroke-width="1.1"/><path d="M13 2 V4 H15" fill="none" stroke="#000" stroke-width="0.8"/><path d="M2.8 8.5 A4 4 0 0 1 10 5.8 M10.5 9 A4 4 0 0 1 3.3 11.5" fill="none" stroke="#000080" stroke-width="3.2" shape-rendering="geometricPrecision"/><path d="M7.5 2.5 H12.5 V7.5 Z M6 15 H1 V10 Z" fill="#000080" shape-rendering="geometricPrecision"/></svg>
<div style="left:364px;top:368px;width:1px;height:18px;background:#a0a0a0"></div>
<svg style="position:absolute;left:373px;top:369px" width="16" height="16" viewBox="0 0 16 16" shape-rendering="crispEdges"><rect x="0.5" y="1.5" width="15" height="13" fill="#0a2a80" stroke="#c0c0f8" stroke-width="1.2"/><path d="M4.5 4.5 L11.5 11.5 M11.5 4.5 L4.5 11.5" stroke="#b0c4e4" stroke-width="1.4" shape-rendering="geometricPrecision"/></svg>
<div style="left:6px;top:390px;width:447px;height:220px;background:#fff;border-left:1px solid #a0a0a0;border-top:1px solid #a0a0a0;border-right:1px solid #a0a0a0;box-sizing:border-box"></div>
<div style="left:336px;top:391px;width:1px;height:19px;background:#e5e5e5"></div>
<div style="left:451px;top:391px;width:1px;height:19px;background:#e5e5e5"></div>
<div class="t" style="left:12.9px;top:393.64px;font-size:12px;line-height:normal;color:#000;letter-spacing:0.177px;font-family:'Liberation Sans', sans-serif;">Object Name</div>
<div class="t" style="left:342.3px;top:393.64px;font-size:12px;line-height:normal;color:#000;letter-spacing:0.018px;font-family:'Liberation Sans', sans-serif;">Description</div>
<svg style="position:absolute;left:11px;top:414px" width="9" height="9" viewBox="0 0 9 9" shape-rendering="crispEdges"><rect x="0.5" y="0.5" width="8" height="8" fill="#fafafa" stroke="#a4a4a4"/><rect x="1" y="5" width="7" height="3" fill="#e8ece8"/><rect x="2" y="4" width="5" height="1" fill="#4060d0"/></svg>
<div style="left:20px;top:418px;width:4px;height:1px;background:repeating-linear-gradient(90deg,#a0a0a0 0 1px,transparent 1px 2px)"></div>
<svg style="position:absolute;left:26px;top:410px" width="16" height="16" viewBox="0 0 16 16" shape-rendering="crispEdges"><rect x="2" y="12.8" width="13" height="1.2" fill="#a8b8e8"/><path d="M3.5 5.5 V2.5 L4.5 1.5 H9.5 L10.5 3.5 H14.5 V12.5 H12" fill="#fff4c0" stroke="#000" stroke-width="1.05"/><path d="M0.6 5.6 H11.2 L11.8 7.5 V12.5 H2.5 L1.5 9.5 Z" fill="#ffe494" stroke="#000" stroke-width="1.05" shape-rendering="geometricPrecision"/><path d="M2 7 H10.5" stroke="#fff8d8" stroke-width="1"/></svg>
<div class="t" style="left:45.4px;top:413.19px;font-size:11.5px;line-height:normal;color:#000;letter-spacing:0.134px;font-family:'Liberation Sans', sans-serif;">ZHEVTEST</div>
<div class="t" style="left:339.8px;top:412.99px;font-size:11.5px;line-height:normal;color:#000;letter-spacing:0.345px;font-family:'Liberation Sans', sans-serif;">ABAP Test</div>
<div style="left:29px;top:427px;width:1px;height:85px;background:repeating-linear-gradient(180deg,#a0a0a0 0 1px,transparent 1px 2px)"></div>
<div style="left:30px;top:436px;width:6px;height:1px;background:repeating-linear-gradient(90deg,#a0a0a0 0 1px,transparent 1px 2px)"></div>
<svg style="position:absolute;left:35px;top:432px" width="9" height="9" viewBox="0 0 9 9" shape-rendering="crispEdges"><rect x="0.5" y="0.5" width="8" height="8" fill="#fafafa" stroke="#a4a4a4"/><rect x="1" y="5" width="7" height="3" fill="#e8ece8"/><rect x="2" y="4" width="5" height="1" fill="#4060d0"/></svg>
<svg style="position:absolute;left:43px;top:428px" width="16" height="16" viewBox="0 0 16 16" shape-rendering="crispEdges"><rect x="2" y="12.8" width="13" height="1.2" fill="#a8b8e8"/><path d="M3.5 5.5 V2.5 L4.5 1.5 H9.5 L10.5 3.5 H14.5 V12.5 H12" fill="#fff4c0" stroke="#000" stroke-width="1.05"/><path d="M0.6 5.6 H11.2 L11.8 7.5 V12.5 H2.5 L1.5 9.5 Z" fill="#ffe494" stroke="#000" stroke-width="1.05" shape-rendering="geometricPrecision"/><path d="M2 7 H10.5" stroke="#fff8d8" stroke-width="1"/></svg>
<div class="t" style="left:62.5px;top:430.89px;font-size:11.5px;line-height:normal;color:#000;letter-spacing:0.382px;font-family:'Liberation Sans', sans-serif;">Function Modules</div>
<div style="left:46px;top:446px;width:1px;height:8px;background:repeating-linear-gradient(180deg,#a0a0a0 0 1px,transparent 1px 2px)"></div>
<div style="left:47px;top:453px;width:10px;height:1px;background:repeating-linear-gradient(90deg,#a0a0a0 0 1px,transparent 1px 2px)"></div>
<div class="t" style="left:59.2px;top:447.89px;font-size:11.5px;line-height:normal;color:#000;letter-spacing:0.216px;font-family:'Liberation Sans', sans-serif;">Z_HEV_TEST</div>
<div class="t" style="left:339.8px;top:447.89px;font-size:11.5px;line-height:normal;color:#000;letter-spacing:0px;font-family:'Liberation Sans', sans-serif;">Test</div>
<div style="left:30px;top:470px;width:6px;height:1px;background:repeating-linear-gradient(90deg,#a0a0a0 0 1px,transparent 1px 2px)"></div>
<svg style="position:absolute;left:35px;top:466px" width="9" height="9" viewBox="0 0 9 9" shape-rendering="crispEdges"><rect x="0.5" y="0.5" width="8" height="8" fill="#fafafa" stroke="#a4a4a4"/><rect x="1" y="5" width="7" height="3" fill="#e8ece8"/><rect x="2" y="4" width="5" height="1" fill="#4060d0"/></svg>
<svg style="position:absolute;left:43px;top:462px" width="16" height="16" viewBox="0 0 16 16" shape-rendering="crispEdges"><rect x="2" y="12.8" width="13" height="1.2" fill="#a8b8e8"/><path d="M3.5 5.5 V2.5 L4.5 1.5 H9.5 L10.5 3.5 H14.5 V12.5 H12" fill="#fff4c0" stroke="#000" stroke-width="1.05"/><path d="M0.6 5.6 H11.2 L11.8 7.5 V12.5 H2.5 L1.5 9.5 Z" fill="#ffe494" stroke="#000" stroke-width="1.05" shape-rendering="geometricPrecision"/><path d="M2 7 H10.5" stroke="#fff8d8" stroke-width="1"/></svg>
<div class="t" style="left:62.8px;top:464.99px;font-size:11.5px;line-height:normal;color:#000;letter-spacing:-0.235px;font-family:'Liberation Sans', sans-serif;">Fields</div>
<div style="left:46px;top:480px;width:1px;height:8px;background:repeating-linear-gradient(180deg,#a0a0a0 0 1px,transparent 1px 2px)"></div>
<div style="left:47px;top:487px;width:10px;height:1px;background:repeating-linear-gradient(90deg,#a0a0a0 0 1px,transparent 1px 2px)"></div>
<div class="t" style="left:59.9px;top:481.89px;font-size:11.5px;line-height:normal;color:#000;letter-spacing:-0.579px;font-family:'Liberation Sans', sans-serif;">GF_KUNNR</div>
<div style="left:30px;top:504px;width:6px;height:1px;background:repeating-linear-gradient(90deg,#a0a0a0 0 1px,transparent 1px 2px)"></div>
<svg style="position:absolute;left:35px;top:500px" width="9" height="9" viewBox="0 0 9 9" shape-rendering="crispEdges"><rect x="0.5" y="0.5" width="8" height="8" fill="#fafafa" stroke="#a4a4a4"/><rect x="1" y="5" width="7" height="3" fill="#e8ece8"/><rect x="2" y="4" width="5" height="1" fill="#4060d0"/></svg>
<svg style="position:absolute;left:43px;top:496px" width="16" height="16" viewBox="0 0 16 16" shape-rendering="crispEdges"><rect x="2" y="12.8" width="13" height="1.2" fill="#a8b8e8"/><path d="M3.5 5.5 V2.5 L4.5 1.5 H9.5 L10.5 3.5 H14.5 V12.5 H12" fill="#fff4c0" stroke="#000" stroke-width="1.05"/><path d="M0.6 5.6 H11.2 L11.8 7.5 V12.5 H2.5 L1.5 9.5 Z" fill="#ffe494" stroke="#000" stroke-width="1.05" shape-rendering="geometricPrecision"/><path d="M2 7 H10.5" stroke="#fff8d8" stroke-width="1"/></svg>
<div class="t" style="left:62.8px;top:498.79px;font-size:11.5px;line-height:normal;color:#000;letter-spacing:0.424px;font-family:'Liberation Sans', sans-serif;">Includes</div>
<div style="left:46px;top:514px;width:1px;height:23px;background:repeating-linear-gradient(180deg,#a0a0a0 0 1px,transparent 1px 2px)"></div>
<div style="left:47px;top:521px;width:10px;height:1px;background:repeating-linear-gradient(90deg,#a0a0a0 0 1px,transparent 1px 2px)"></div>
<div class="t" style="left:59.9px;top:515.79px;font-size:11.5px;line-height:normal;color:#000;letter-spacing:-0.081px;font-family:'Liberation Sans', sans-serif;">LZHEVTESTTOP</div>
<div style="left:47px;top:537px;width:10px;height:1px;background:repeating-linear-gradient(90deg,#a0a0a0 0 1px,transparent 1px 2px)"></div>
<div style="left:58px;top:530px;width:278px;height:16px;background:#0a78d7"></div>
<div style="left:338px;top:530px;width:114px;height:16px;background:#0a78d7"></div>
<div class="t" style="left:59.9px;top:531.29px;font-size:11.5px;line-height:normal;color:#fff;letter-spacing:-0.209px;font-family:'Liberation Sans', sans-serif;">LZHEVTESTUXX</div>
<div class="t" style="left:339.8px;top:531.29px;font-size:11.5px;line-height:normal;color:#fff;letter-spacing:-0.209px;font-family:'Liberation Sans', sans-serif;">LZHEVTESTUXX</div>
<div style="left:458px;top:108px;width:1px;height:1px;background:#f0f0f0"></div>
<div style="left:459px;top:108px;width:625px;height:502px;background:#f1f1f1;border-left:2px solid #6a6a6a;border-top:2px solid #6a6a6a;box-sizing:border-box"></div>
<div style="left:461px;top:110px;width:623px;height:1px;background:#f8f8f8"></div>
<div class="t" style="left:466.6px;top:120.74px;font-size:12px;line-height:normal;color:#000;letter-spacing:0.251px;font-family:'Liberation Sans', sans-serif;">Include</div>
<div style="left:583px;top:117px;width:216px;height:21px;background:#f0f0f0;border:1px solid #b4b4b4;box-sizing:border-box"></div>
<div class="t" style="left:586.4px;top:121.88px;font-size:11.67px;line-height:normal;color:#000;letter-spacing:0px;font-family:'Liberation Mono', monospace;">LZHEVTESTUXX</div>
<div class="t" style="left:803px;top:120.74px;font-size:12px;line-height:normal;color:#000;letter-spacing:0.184px;font-family:'Liberation Sans', sans-serif;">Active</div>
<div style="left:464px;top:138px;width:620px;height:1px;background:#fafafa"></div>
<div style="left:464px;top:139px;width:620px;height:471px;background:#e6eef0;border-left:2px solid #6a6a6a;border-top:2px solid #6a6a6a;box-sizing:border-box"></div>
<div style="left:466px;top:141px;width:19px;height:469px;background:#f2ead8"></div>
<div style="left:485px;top:141px;width:1px;height:469px;background:#a0a0a0"></div>
<div style="left:519px;top:141px;width:1px;height:469px;background:repeating-linear-gradient(180deg,#2a8a8a 0 1px,transparent 1px 2px)"></div>
<div style="left:547px;top:141px;width:537px;height:17px;background:#dbe5f2"></div>
<div style="left:545px;top:141px;width:2px;height:17px;background:#000"></div>
<svg style="position:absolute;left:532px;top:145px" width="9" height="9" viewBox="0 0 9 9" shape-rendering="crispEdges"><rect x="0.5" y="0.5" width="8" height="8" fill="none" stroke="#909090"/><rect x="2" y="4" width="5" height="1" fill="#909090"/></svg>
<div style="left:536px;top:158px;width:1px;height:42px;background:#909090"></div>
<div style="left:536px;top:199px;width:4px;height:1px;background:#909090"></div>
<div class="t" style="left:510px;top:143.09px;font-size:11.5px;line-height:normal;color:#1e7e8e;letter-spacing:0px;font-family:'Liberation Sans', sans-serif;width:8px;text-align:right">1</div>
<div class="t" style="left:510px;top:160.09px;font-size:11.5px;line-height:normal;color:#1e7e8e;letter-spacing:0px;font-family:'Liberation Sans', sans-serif;width:8px;text-align:right">2</div>
<div class="t" style="left:510px;top:177.09px;font-size:11.5px;line-height:normal;color:#1e7e8e;letter-spacing:0px;font-family:'Liberation Sans', sans-serif;width:8px;text-align:right">3</div>
<div class="t" style="left:510px;top:194.09px;font-size:11.5px;line-height:normal;color:#1e7e8e;letter-spacing:0px;font-family:'Liberation Sans', sans-serif;width:8px;text-align:right">4</div>
<div class="t" style="left:510px;top:211.09px;font-size:11.5px;line-height:normal;color:#1e7e8e;letter-spacing:0px;font-family:'Liberation Sans', sans-serif;width:8px;text-align:right">5</div>
<div class="t" style="left:510px;top:228.09px;font-size:11.5px;line-height:normal;color:#1e7e8e;letter-spacing:0px;font-family:'Liberation Sans', sans-serif;width:8px;text-align:right">6</div>
<div class="t" style="left:546px;top:142.90px;font-size:13.333px;line-height:normal;color:#000;letter-spacing:0px;font-family:'Liberation Mono', monospace;white-space:pre;transform:scaleY(0.87);transform-origin:0 11.1px"><span class="c"><span class="a">*</span><span class="a">*</span><span class="a">*</span><span class="a">*</span><span class="a">*</span><span class="a">*</span><span class="a">*</span><span class="a">*</span><span class="a">*</span><span class="a">*</span><span class="a">*</span><span class="a">*</span><span class="a">*</span><span class="a">*</span><span class="a">*</span><span class="a">*</span><span class="a">*</span><span class="a">*</span><span class="a">*</span><span class="a">*</span><span class="a">*</span><span class="a">*</span><span class="a">*</span><span class="a">*</span><span class="a">*</span><span class="a">*</span><span class="a">*</span><span class="a">*</span><span class="a">*</span><span class="a">*</span><span class="a">*</span><span class="a">*</span><span class="a">*</span><span class="a">*</span><span class="a">*</span><span class="a">*</span><span class="a">*</span><span class="a">*</span><span class="a">*</span><span class="a">*</span><span class="a">*</span><span class="a">*</span><span class="a">*</span><span class="a">*</span><span class="a">*</span><span class="a">*</span><span class="a">*</span><span class="a">*</span><span class="a">*</span><span class="a">*</span><span class="a">*</span><span class="a">*</span><span class="a">*</span><span class="a">*</span><span class="a">*</span><span class="a">*</span><span class="a">*</span><span class="a">*</span><span class="a">*</span><span class="a">*</span><span class="a">*</span><span class="a">*</span><span class="a">*</span><span class="a">*</span><span class="a">*</span></span></div>
<div class="t" style="left:546px;top:159.90px;font-size:13.333px;line-height:normal;color:#000;letter-spacing:0px;font-family:'Liberation Mono', monospace;white-space:pre;transform:scaleY(0.87);transform-origin:0 11.1px"><span class="c"><span class="a">*</span>   THIS FILE IS GENERATED BY THE FUNCTION LIBRARY.             <span class="a">*</span></span></div>
<div class="t" style="left:546px;top:176.90px;font-size:13.333px;line-height:normal;color:#000;letter-spacing:0px;font-family:'Liberation Mono', monospace;white-space:pre;transform:scaleY(0.87);transform-origin:0 11.1px"><span class="c"><span class="a">*</span>   NEVER CHANGE IT MANUALLY, PLEASE!                           <span class="a">*</span></span></div>
<div class="t" style="left:546px;top:193.90px;font-size:13.333px;line-height:normal;color:#000;letter-spacing:0px;font-family:'Liberation Mono', monospace;white-space:pre;transform:scaleY(0.87);transform-origin:0 11.1px"><span class="c"><span class="a">*</span><span class="a">*</span><span class="a">*</span><span class="a">*</span><span class="a">*</span><span class="a">*</span><span class="a">*</span><span class="a">*</span><span class="a">*</span><span class="a">*</span><span class="a">*</span><span class="a">*</span><span class="a">*</span><span class="a">*</span><span class="a">*</span><span class="a">*</span><span class="a">*</span><span class="a">*</span><span class="a">*</span><span class="a">*</span><span class="a">*</span><span class="a">*</span><span class="a">*</span><span class="a">*</span><span class="a">*</span><span class="a">*</span><span class="a">*</span><span class="a">*</span><span class="a">*</span><span class="a">*</span><span class="a">*</span><span class="a">*</span><span class="a">*</span><span class="a">*</span><span class="a">*</span><span class="a">*</span><span class="a">*</span><span class="a">*</span><span class="a">*</span><span class="a">*</span><span class="a">*</span><span class="a">*</span><span class="a">*</span><span class="a">*</span><span class="a">*</span><span class="a">*</span><span class="a">*</span><span class="a">*</span><span class="a">*</span><span class="a">*</span><span class="a">*</span><span class="a">*</span><span class="a">*</span><span class="a">*</span><span class="a">*</span><span class="a">*</span><span class="a">*</span><span class="a">*</span><span class="a">*</span><span class="a">*</span><span class="a">*</span><span class="a">*</span><span class="a">*</span><span class="a">*</span><span class="a">*</span></span></div>
<div class="t" style="left:546px;top:209.90px;font-size:13.333px;line-height:normal;color:#000;letter-spacing:0px;font-family:'Liberation Mono', monospace;white-space:pre;transform:scaleY(0.87);transform-origin:0 11.1px"><span class="k">include</span> lzhevtestu01.</div>
<div class="t" style="left:546px;top:226.90px;font-size:13.333px;line-height:normal;color:#000;letter-spacing:0px;font-family:'Liberation Mono', monospace;white-space:pre;transform:scaleY(0.87);transform-origin:0 11.1px">                    <span class="c">"Z_HEV_TEST</span></div>
</body></html>
